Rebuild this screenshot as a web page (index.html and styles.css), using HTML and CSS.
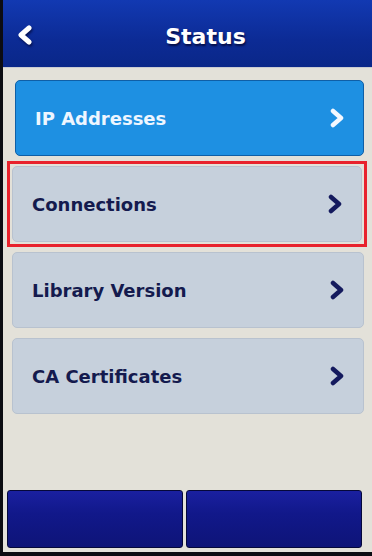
FILE: index.html
```html
<!DOCTYPE html>
<html lang="en">
<head>
  <meta charset="UTF-8" />
  <meta name="viewport" content="width=device-width, initial-scale=1.0"/>
  <title>Status</title>
  <link rel="stylesheet" href="styles.css">
</head>
<body>
  <div class="screen">
    <header class="topbar">
      <span class="back">
        <svg width="16" height="20" viewBox="0 0 16 20">
          <polyline points="12,3 4,10 12,17" fill="none" stroke="#fff" stroke-width="5" stroke-linecap="round" stroke-linejoin="round"/>
        </svg>
      </span>
      <h1>Status</h1>
    </header>

    <div class="menu">
      <div class="item active">
        <span>IP Addresses</span>
        <svg class="chev" width="14" height="20" viewBox="0 0 14 20">
          <polyline points="3,3 11,10 3,17" fill="none" stroke="currentColor" stroke-width="4.5" stroke-linecap="round" stroke-linejoin="round"/>
        </svg>
      </div>
      <div class="focus">
        <div class="item">
          <span>Connections</span>
          <svg class="chev" width="14" height="20" viewBox="0 0 14 20">
            <polyline points="3,3 11,10 3,17" fill="none" stroke="currentColor" stroke-width="4.5" stroke-linecap="round" stroke-linejoin="round"/>
          </svg>
        </div>
      </div>
      <div class="item">
        <span>Library Version</span>
        <svg class="chev" width="14" height="20" viewBox="0 0 14 20">
          <polyline points="3,3 11,10 3,17" fill="none" stroke="currentColor" stroke-width="4.5" stroke-linecap="round" stroke-linejoin="round"/>
        </svg>
      </div>
      <div class="item">
        <span>CA Certificates</span>
        <svg class="chev" width="14" height="20" viewBox="0 0 14 20">
          <polyline points="3,3 11,10 3,17" fill="none" stroke="currentColor" stroke-width="4.5" stroke-linecap="round" stroke-linejoin="round"/>
        </svg>
      </div>
    </div>

    <footer class="softkeys">
      <div class="key"></div>
      <div class="key"></div>
    </footer>
  </div>
</body>
</html>
```

FILE: styles.css
```css
body {
  margin: 0;
  background: #0c0c12;
  font-family: "DejaVu Sans", Verdana, sans-serif;
}

.screen {
  margin-left: 3px;
  width: 369px;
  height: 552px;
  background: #e3e1d9;
  display: flex;
  flex-direction: column;
}

.topbar {
  height: 68px;
  display: flex;
  align-items: center;
  padding: 6px 0 0 14px;
  box-sizing: border-box;
  background: linear-gradient(#1239b2, #0c2b95 60%, #0a2788);
  border-bottom: 1px solid #c9cbd2;
}

.back {
  display: flex;
  margin-top: -3px;
  filter: drop-shadow(1px 2px 1px rgba(0, 0, 40, 0.6));
}

.topbar h1 {
  flex: 1;
  margin: 0;
  padding-left: 6px;
  text-align: center;
  color: #fff;
  font-size: 22px;
  font-weight: bold;
  text-shadow: 1px 2px 2px rgba(0, 0, 40, 0.7);
}

.menu {
  display: flex;
  flex-direction: column;
  gap: 10px;
  padding: 12px 8px 0 9px;
}

.item {
  height: 76px;
  box-sizing: border-box;
  display: flex;
  align-items: center;
  justify-content: space-between;
  padding: 0 19px 0 19px;
  background: #c6d0dc;
  border: 1px solid #b8c2cf;
  border-radius: 5px;
  color: #141a4e;
  font-size: 18px;
  font-weight: bold;
}

.item .chev {
  color: #141a5e;
}

.item.active {
  background: #1e90e2;
  border-color: #0f5fa6;
  color: #eef6ff;
  margin-left: 3px;
}

.item.active .chev {
  color: #f4f8ff;
}

.focus {
  margin: -5px -3px -5px -5px;
  padding: 2px;
  border: 3px solid #e8222c;
}

.softkeys {
  margin-top: auto;
  display: flex;
  gap: 3px;
  padding: 0 10px 4px 4px;
  height: 58px;
}

.key {
  flex: 1;
  background: linear-gradient(#1a20a0, #11188a 40%, #0e1478);
  border: 1px solid #05083a;
  border-radius: 3px;
}
```
